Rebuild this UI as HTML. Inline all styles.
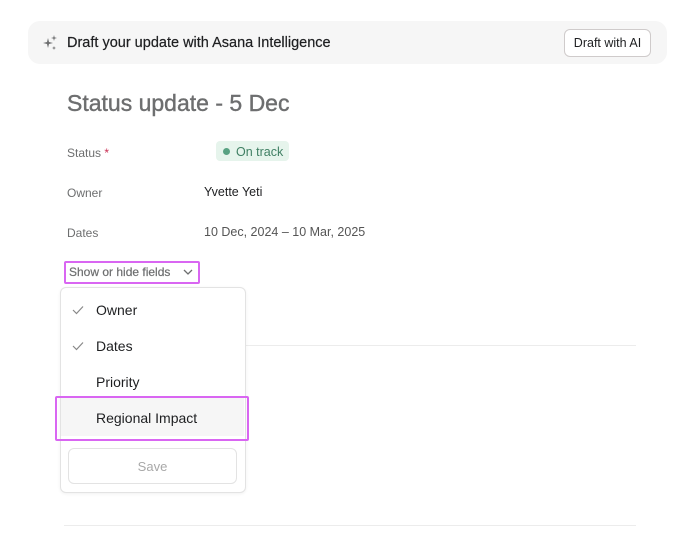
<!DOCTYPE html>
<html><head><style>
body{margin:0;width:683px;height:554px;background:#fff;font-family:"Liberation Sans",sans-serif;position:relative;overflow:hidden;color:#1e1f21}
.a{position:absolute}
.banner{left:28px;top:21px;width:639px;height:43px;background:#f6f6f6;border-radius:12px}
.lbl{font-size:12px;color:#6d6e6f}
.val{font-size:12.5px;color:#1e1f21}
</style></head><body>
<div class="a banner"></div>
<svg class="a" style="left:41px;top:34px" width="18" height="18" viewBox="0 0 18 18" fill="#6d6e6f"><path d="M7 4 L8 8 L12 9 L8 10 L7 14 L6 10 L2 9 L6 8Z"/><path d="M13 1 L13.6 3.4 L16 4 L13.6 4.6 L13 7 L12.4 4.6 L10 4 L12.4 3.4Z"/><path d="M13 12 L13.5 13.5 L15 14 L13.5 14.5 L13 16 L12.5 14.5 L11 14 L12.5 13.5Z"/></svg>
<div class="a" style="left:67px;top:35px;font-size:14.5px;color:#1e1f21;-webkit-text-stroke:0.2px #1e1f21">Draft your update with Asana Intelligence</div>
<div class="a" style="left:564px;top:29px;width:85px;height:26px;border:1px solid #cfcbcb;border-radius:6px;background:#fff;font-size:12.5px;line-height:27px;text-align:center">Draft with AI</div>
<div class="a" style="left:67px;top:90px;font-size:23px;color:#6d6e6f;-webkit-text-stroke:0.4px #6d6e6f">Status update - 5 Dec</div>
<div class="a lbl" style="left:67px;top:146px">Status <span style="color:#c92f54">*</span></div>
<div class="a" style="left:216px;top:141px;width:73px;height:20px;background:#e6f4ec;border-radius:4px"></div>
<div class="a" style="left:223px;top:148px;width:7px;height:7px;border-radius:50%;background:#58a182"></div>
<div class="a" style="left:236px;top:145px;font-size:12.5px;color:#3f7f63">On track</div>
<div class="a lbl" style="left:67px;top:186px">Owner</div>
<div class="a val" style="left:204px;top:185px">Yvette Yeti</div>
<div class="a lbl" style="left:67px;top:226px">Dates</div>
<div class="a val" style="left:204px;top:225px;color:#555">10 Dec, 2024 – 10 Mar, 2025</div>
<div class="a" style="left:64px;top:261px;width:132px;height:19px;border:2px solid #d966f2;border-radius:2px"></div>
<div class="a" style="left:69px;top:265px;font-size:12px;color:#6d6e6f;-webkit-text-stroke:0.2px #6d6e6f">Show or hide fields</div>
<svg class="a" style="left:183px;top:268px" width="10" height="8"><path d="M1 2 L5 6 L9 2" stroke="#6d6e6f" stroke-width="1.3" fill="none"/></svg>
<div class="a" style="left:245px;top:345px;width:391px;height:1px;background:#ececec"></div>
<div class="a" style="left:64px;top:525px;width:572px;height:1px;background:#ececec"></div>
<div class="a" style="left:60px;top:287px;width:184px;height:204px;border:1px solid #e3e3e3;border-radius:6px;background:#fff;box-shadow:0 1px 3px rgba(0,0,0,.06)"></div>
<svg class="a" style="left:72px;top:305px" width="12" height="10"><path d="M1 5 L4.5 8.5 L11 1.5" stroke="#888" stroke-width="1.2" fill="none"/></svg>
<svg class="a" style="left:72px;top:341px" width="12" height="10"><path d="M1 5 L4.5 8.5 L11 1.5" stroke="#888" stroke-width="1.2" fill="none"/></svg>
<div class="a" style="left:96px;top:302px;font-size:14px">Owner</div>
<div class="a" style="left:96px;top:338px;font-size:14px">Dates</div>
<div class="a" style="left:96px;top:374px;font-size:14px">Priority</div>
<div class="a" style="left:61px;top:398px;width:183px;height:38px;background:#f6f6f6"></div>
<div class="a" style="left:55px;top:396px;width:190px;height:41px;border:2px solid #d966f2;border-radius:2px"></div>
<div class="a" style="left:96px;top:410px;font-size:14px">Regional Impact</div>
<div class="a" style="left:68px;top:448px;width:167px;height:34px;border:1px solid #e3e3e3;border-radius:6px;font-size:13px;color:#a8a8a8;text-align:center;line-height:35px">Save</div>
</body></html>
